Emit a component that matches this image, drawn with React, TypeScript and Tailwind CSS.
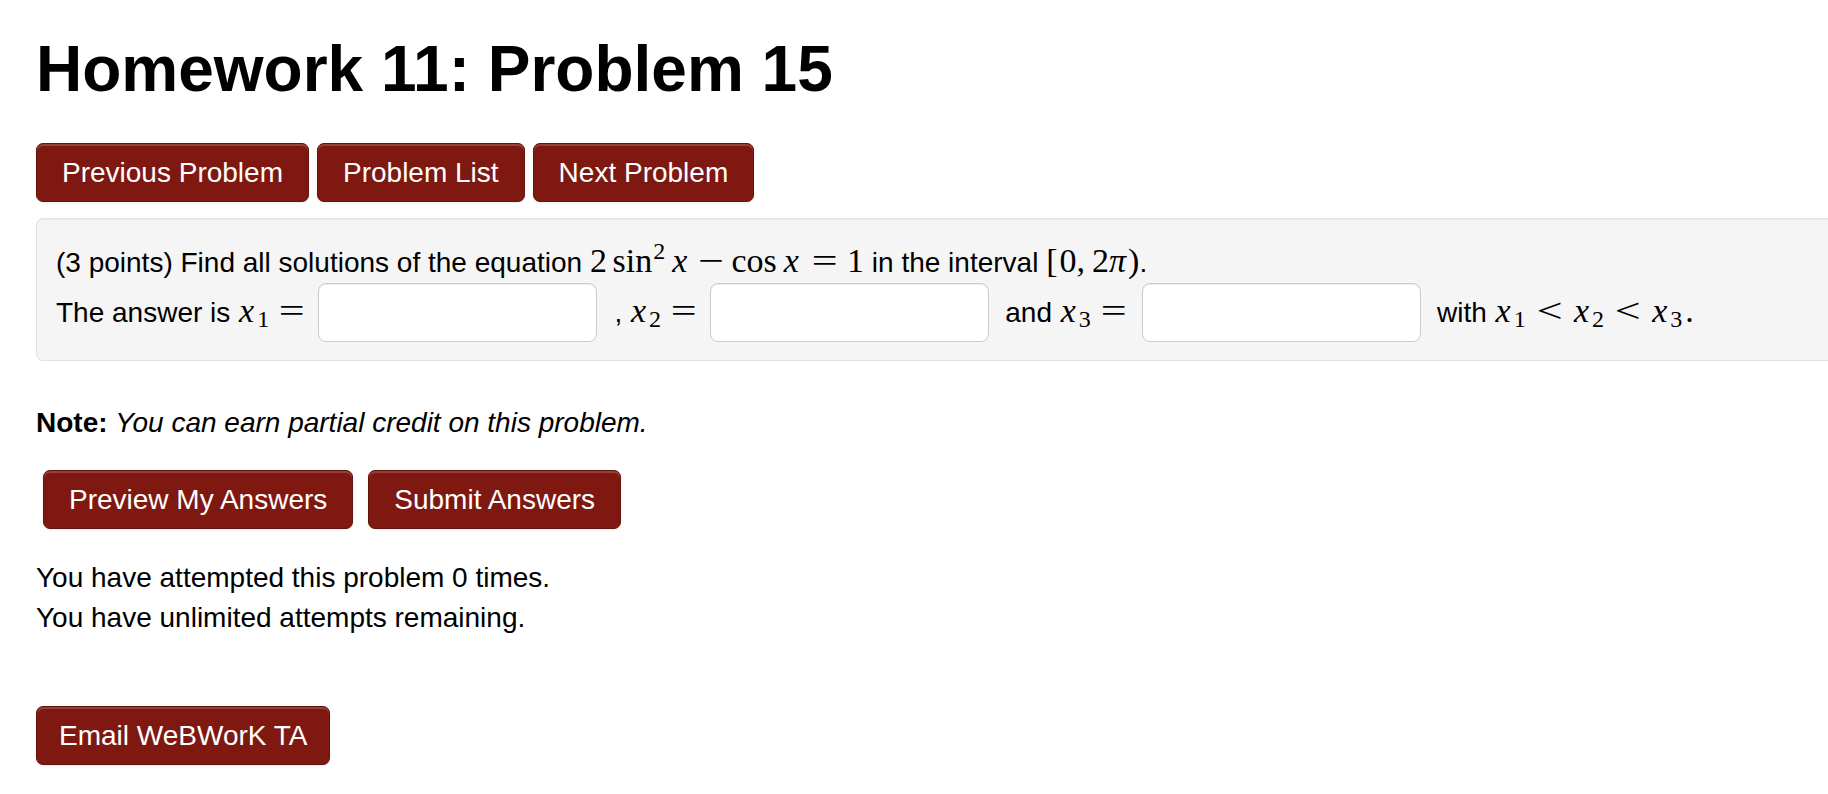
import React from "react";

function Btn({ children, px = "px-[25px]" }: { children: React.ReactNode; px?: string }) {
  return (
    <button
      type="button"
      className={`rounded-[7px] border border-[#63120c] bg-[#7e1810] ${px} pt-[9px] pb-[8px] text-[28px] leading-[40px] text-white shadow-[inset_0_2px_0_rgba(255,255,255,0.18),0_1px_2px_rgba(0,0,0,0.08)] font-['Liberation_Sans',Arial,sans-serif]`}
    >
      {children}
    </button>
  );
}

function Input() {
  return (
    <input
      type="text"
      className="h-[59px] w-[279px] rounded-[8px] border border-[#cccccc] bg-white shadow-[inset_0_1px_1px_rgba(0,0,0,0.075)] outline-none"
    />
  );
}

const math = "font-['Liberation_Serif','Times_New_Roman',serif] text-[34px] leading-[0]";

function X({ n }: { n?: string }) {
  return (
    <span className="whitespace-nowrap">
      <span className="italic pl-[1px] pr-[3px]">x</span>
      {n ? <sub className="text-[0.707em] bottom-[-0.2em]">{n}</sub> : null}
    </span>
  );
}

function Op({ c, m = "mx-[13px]" }: { c: string; m?: string }) {
  return <span className={`inline-block scale-x-[1.35] ${m}`}>{c}</span>;
}

export default function App() {
  return (
    <div className="min-h-[794px] bg-white pl-[36px] pt-[37px] text-black font-['Liberation_Sans',Arial,sans-serif] text-[28px] leading-[40px]">
      <h1 className="text-[64px] leading-[64px] font-bold">Homework 11: Problem 15</h1>

      <div className="mt-[42px] flex gap-[8px]">
        <Btn>Previous Problem</Btn>
        <Btn>Problem List</Btn>
        <Btn>Next Problem</Btn>
      </div>

      <div className="mt-[16px] rounded-l-[7px] border border-r-0 border-[#e3e3e3] bg-[#f5f5f5] pl-[19px] pt-[24px] pb-[18px] shadow-[inset_0_1px_1px_rgba(0,0,0,0.05)]">
        <div className="whitespace-nowrap">
          (3 points) Find all solutions of the equation{" "}
          <span className={math}>
            2<span className="ml-[5.6px]">sin</span>
            <sup className="text-[0.707em] top-[-0.55em] ml-[1px]">2</sup>
            <span className="ml-[6px]">
              <X />
            </span>
            <Op c="−" m="mx-[11px]" />
            cos
            <span className="ml-[6px]">
              <X />
            </span>
            <Op c="=" />1
          </span>{" "}
          in the interval{" "}
          <span className={math}>
            <span className="pr-[2px]">[</span>0,<span className="ml-[7px]">2</span>
            <span className="italic pr-[2px]">π</span>)
          </span>
          .
        </div>
        <div className="flex items-center whitespace-pre">
          <span>The answer is </span>
          <span className={math}>
            <X n="1" />
            <Op c="=" m="ml-[13px]" />
          </span>
          <span className="ml-[17px] flex">
            <Input />
          </span>
          <span className="ml-[17px]">, </span>
          <span className={math}>
            <X n="2" />
            <Op c="=" m="ml-[13px]" />
          </span>
          <span className="ml-[17px] flex">
            <Input />
          </span>
          <span className="ml-[16px]">and </span>
          <span className={math}>
            <X n="3" />
            <Op c="=" m="ml-[13px]" />
          </span>
          <span className="ml-[19px] flex">
            <Input />
          </span>
          <span className="ml-[16px]">with </span>
          <span className={math}>
            <X n="1" />
            <Op c="&lt;" m="mx-[14px]" />
            <X n="2" />
            <Op c="&lt;" m="mx-[14px]" />
            <X n="3" />
            <span className="ml-[3px]">.</span>
          </span>
        </div>
      </div>

      <div className="mt-[42px]">
        <span className="font-bold">Note:</span> <span className="italic">You can earn partial credit on this problem.</span>
      </div>

      <div className="mt-[27px] ml-[7px] flex gap-[15px]">
        <Btn>Preview My Answers</Btn>
        <Btn>Submit Answers</Btn>
      </div>

      <div className="mt-[29px]">
        <div>You have attempted this problem 0 times.</div>
        <div>You have unlimited attempts remaining.</div>
      </div>

      <div className="mt-[68px] pb-[28px]">
        <Btn px="px-[22px]">Email WeBWorK TA</Btn>
      </div>
    </div>
  );
}
